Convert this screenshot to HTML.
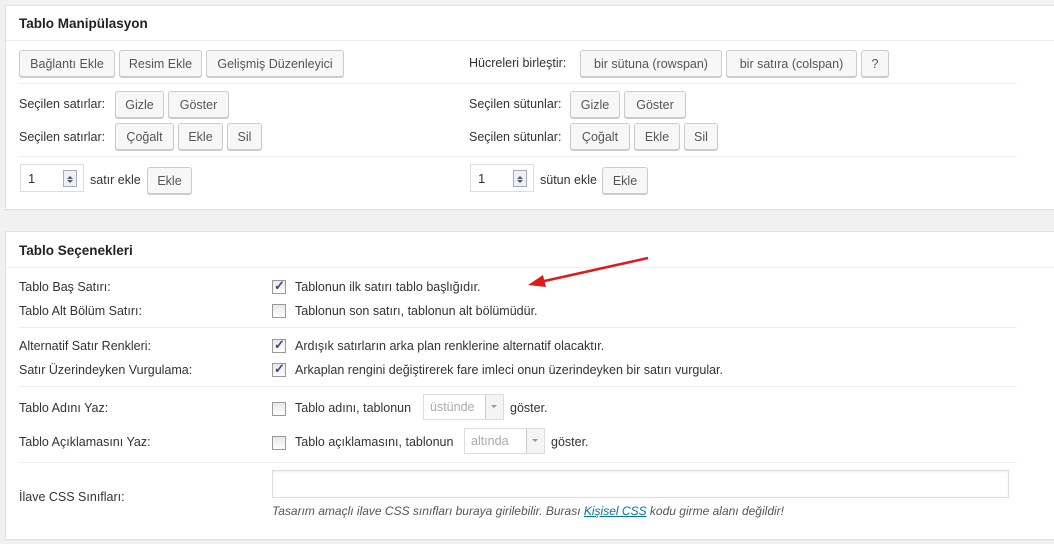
<!DOCTYPE html>
<html><head><meta charset="utf-8"><style>
*{box-sizing:border-box;margin:0;padding:0}
body{width:1054px;height:544px;background:#f1f1f1;font-family:"Liberation Sans",sans-serif;font-size:12.5px;color:#333;position:relative;overflow:hidden}
.p{position:absolute;background:#fff;border:1px solid #e3e3e3;box-shadow:0 1px 1px rgba(0,0,0,.04)}
.a{position:absolute;white-space:nowrap}
.h{font-weight:bold;font-size:13.5px;color:#222}
.hr{position:absolute;height:1px;background:#eee}
.b{position:absolute;height:27px;border:1px solid #ccc;background:#f7f7f7;border-radius:3px;box-shadow:0 1px 0 #ccc;text-align:center;line-height:27px;color:#555;font-size:12.5px;white-space:nowrap}
.cb{position:absolute;width:14px;height:14px;border:1px solid #999;background:linear-gradient(#e8e8e8,#fff);}
.cb.on::after{content:"✓";position:absolute;left:1px;top:-3px;font-size:13px;font-weight:bold;color:#3a4a8a;}
.num{position:absolute;width:64px;height:28px;border:1px solid #ddd;background:#fff;padding:6px 0 0 7px;font-size:13px}
.num i{position:absolute;right:6px;top:5px;width:14px;height:17px;border:1px solid #aab;background:#eef0f8;}
.num i::before{content:"";position:absolute;left:3px;top:2px;border:3px solid transparent;border-bottom-color:#556}
.num i::after{content:"";position:absolute;left:3px;top:9px;border:3px solid transparent;border-top-color:#556}
.sel{position:absolute;height:26px;border:1px solid #ddd;background:#fff;color:#aaa;padding:5px 0 0 6px}
.sel i{position:absolute;right:0;top:0;width:18px;height:24px;border-left:1px solid #ccc;background:#f4f4f4}
.sel i::after{content:"";position:absolute;left:5px;top:10px;border:3px solid transparent;border-top-color:#999}
</style></head><body>
<div class="p" style="left:5px;top:5px;width:1060px;height:205px"></div>
<div class="a h" style="left:19px;top:16px">Tablo Manipülasyon</div>
<div class="hr" style="left:6px;top:40px;width:1048px"></div>
<div class="b" style="left:19px;top:50px;width:96px">Bağlantı Ekle</div>
<div class="b" style="left:119px;top:50px;width:83px">Resim Ekle</div>
<div class="b" style="left:206px;top:50px;width:138px">Gelişmiş Düzenleyici</div>
<div class="a" style="left:469px;top:56px">Hücreleri birleştir:</div>
<div class="b" style="left:580px;top:50px;width:142px">bir sütuna (rowspan)</div>
<div class="b" style="left:726px;top:50px;width:131px">bir satıra (colspan)</div>
<div class="b" style="left:861px;top:50px;width:28px">?</div>
<div class="hr" style="left:19px;top:83px;width:998px"></div>
<div class="a" style="left:19px;top:97px">Seçilen satırlar:</div>
<div class="b" style="left:115px;top:91px;width:49px">Gizle</div>
<div class="b" style="left:168px;top:91px;width:61px">Göster</div>
<div class="a" style="left:19px;top:130px">Seçilen satırlar:</div>
<div class="b" style="left:115px;top:123px;width:59px">Çoğalt</div>
<div class="b" style="left:178px;top:123px;width:45px">Ekle</div>
<div class="b" style="left:227px;top:123px;width:35px">Sil</div>
<div class="a" style="left:469px;top:97px">Seçilen sütunlar:</div>
<div class="b" style="left:570px;top:91px;width:50px">Gizle</div>
<div class="b" style="left:624px;top:91px;width:62px">Göster</div>
<div class="a" style="left:469px;top:130px">Seçilen sütunlar:</div>
<div class="b" style="left:570px;top:123px;width:60px">Çoğalt</div>
<div class="b" style="left:634px;top:123px;width:46px">Ekle</div>
<div class="b" style="left:684px;top:123px;width:34px">Sil</div>
<div class="hr" style="left:19px;top:156px;width:998px"></div>
<div class="num" style="left:20px;top:164px">1<i></i></div>
<div class="a" style="left:90px;top:173px">satır ekle</div>
<div class="b" style="left:147px;top:167px;width:45px">Ekle</div>
<div class="num" style="left:470px;top:164px">1<i></i></div>
<div class="a" style="left:540px;top:173px">sütun ekle</div>
<div class="b" style="left:602px;top:167px;width:46px">Ekle</div>

<div class="p" style="left:5px;top:231px;width:1060px;height:309px"></div>
<div class="a h" style="left:19px;top:243px">Tablo Seçenekleri</div>
<div class="hr" style="left:6px;top:267px;width:1048px"></div>
<div class="a" style="left:19px;top:280px">Tablo Baş Satırı:</div>
<div class="cb on" style="left:272px;top:280px"></div>
<div class="a" style="left:295px;top:280px">Tablonun ilk satırı tablo başlığıdır.</div>
<div class="a" style="left:19px;top:304px">Tablo Alt Bölüm Satırı:</div>
<div class="cb" style="left:272px;top:304px"></div>
<div class="a" style="left:295px;top:304px">Tablonun son satırı, tablonun alt bölümüdür.</div>
<div class="hr" style="left:19px;top:327px;width:998px"></div>
<div class="a" style="left:19px;top:339px">Alternatif Satır Renkleri:</div>
<div class="cb on" style="left:272px;top:339px"></div>
<div class="a" style="left:295px;top:339px">Ardışık satırların arka plan renklerine alternatif olacaktır.</div>
<div class="a" style="left:19px;top:363px">Satır Üzerindeyken Vurgulama:</div>
<div class="cb on" style="left:272px;top:363px"></div>
<div class="a" style="left:295px;top:363px">Arkaplan rengini değiştirerek fare imleci onun üzerindeyken bir satırı vurgular.</div>
<div class="hr" style="left:19px;top:386px;width:998px"></div>
<div class="a" style="left:19px;top:401px">Tablo Adını Yaz:</div>
<div class="cb" style="left:272px;top:402px"></div>
<div class="a" style="left:295px;top:401px">Tablo adını, tablonun</div>
<div class="sel" style="left:423px;top:394px;width:81px">üstünde<i></i></div>
<div class="a" style="left:510px;top:401px">göster.</div>
<div class="a" style="left:19px;top:435px">Tablo Açıklamasını Yaz:</div>
<div class="cb" style="left:272px;top:436px"></div>
<div class="a" style="left:295px;top:435px">Tablo açıklamasını, tablonun</div>
<div class="sel" style="left:464px;top:428px;width:81px">altında<i></i></div>
<div class="a" style="left:551px;top:435px">göster.</div>
<div class="hr" style="left:19px;top:462px;width:998px"></div>
<div class="a" style="left:19px;top:490px">İlave CSS Sınıfları:</div>
<div style="position:absolute;left:272px;top:470px;width:737px;height:28px;border:1px solid #ddd;box-shadow:inset 0 1px 2px rgba(0,0,0,.07)"></div>
<div class="a" style="left:272px;top:504px;font-style:italic;color:#555;font-size:12px">Tasarım amaçlı ilave CSS sınıfları buraya girilebilir. Burası <span style="color:#0073aa;text-decoration:underline">Kişisel CSS</span> kodu girme alanı değildir!</div>
<svg style="position:absolute;left:0;top:0" width="1054" height="544"><line x1="648" y1="258" x2="540" y2="282" stroke="#e0191b" stroke-width="2.5"/><polygon points="528,285 543,275 546,287" fill="#e0191b"/></svg>
</body></html>
